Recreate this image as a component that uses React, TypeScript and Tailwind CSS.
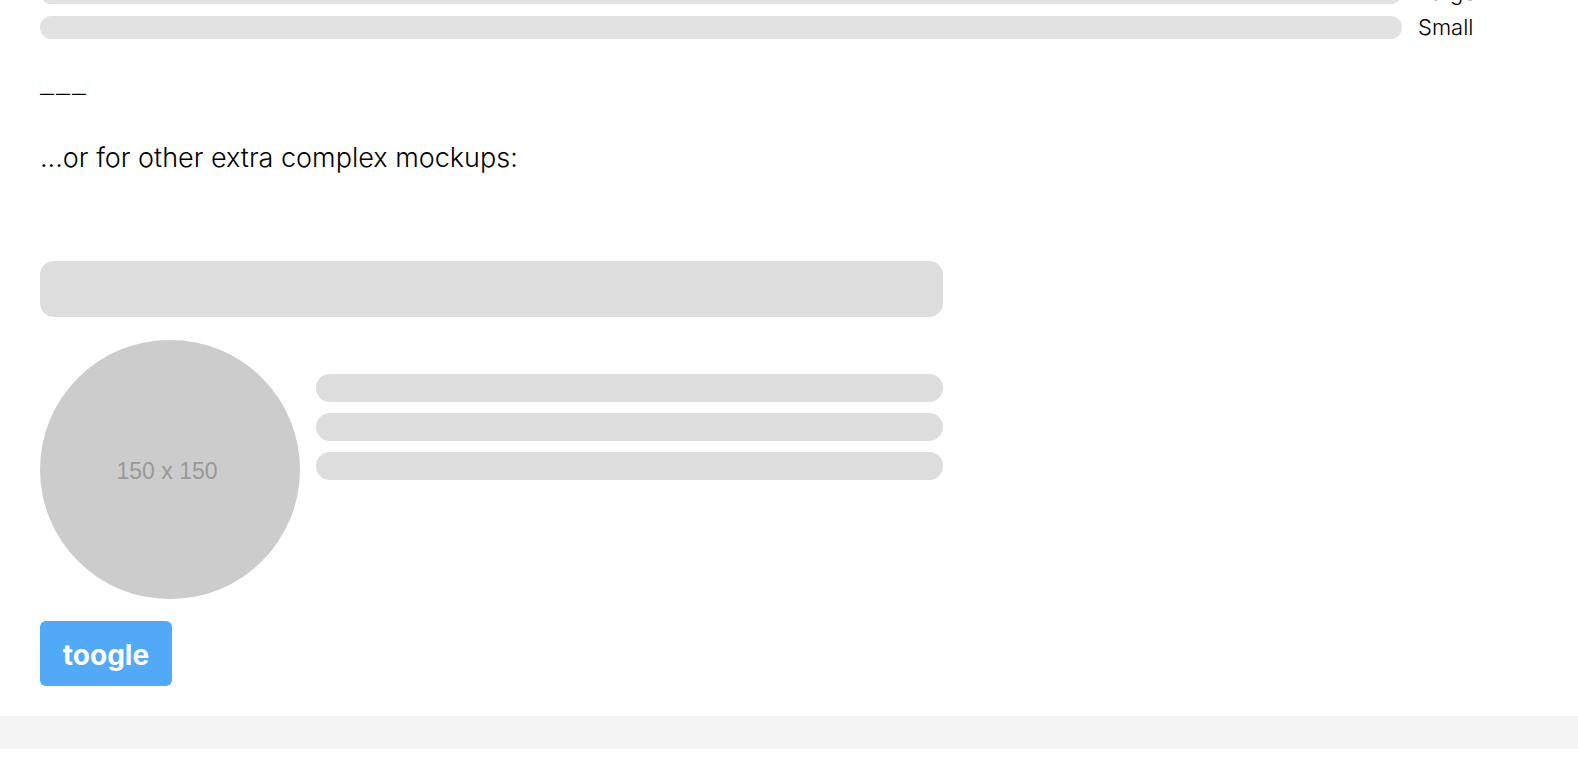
const SizeRow = ({ label }: { label: string }) => (
  <div className="flex items-center gap-4">
    <div className="h-[23px] flex-1 rounded-full bg-[#e2e2e2]" />
    <div className="w-[120px] text-[22px] font-light leading-[23px] text-black">
      {label}
    </div>
  </div>
)

const Line = () => <div className="h-[28px] w-full rounded-full bg-[#dddddd]" />

export default function App() {
  return (
    <div className="h-[784px] overflow-hidden bg-white font-['Inter','Liberation_Sans',sans-serif] text-black">
      <div className="-mt-[19px] flex flex-col gap-[12px] px-10">
        <SizeRow label="Large" />
        <SizeRow label="Small" />
      </div>
      <div className="px-10 pt-[42px] text-[28px] font-extralight leading-[24px] tracking-[2px] text-black">
        –––
      </div>
      <p className="px-10 pt-[38px] text-[27px] font-light leading-[30px]">
        ...or for other extra complex mockups:
      </p>
      <div className="w-[983px] px-10 pt-[88px]">
        <div className="h-[56px] w-full rounded-[14px] bg-[#dddddd]" />
        <div className="mt-[23px] flex gap-4">
          <div className="flex h-[259px] w-[260px] shrink-0 items-center justify-center rounded-full bg-[#cccccc] pr-[6px] pt-[4px] font-['Liberation_Sans',sans-serif] text-[23px] text-[#999999]">
            150 x 150
          </div>
          <div className="flex flex-1 flex-col gap-[11px] pt-[34px]">
            <Line />
            <Line />
            <Line />
          </div>
        </div>
        <button className="mt-[22px] h-[65px] w-[132px] rounded-[6px] bg-[#51a9f8] pt-[2px] text-[28px] font-bold text-white">
          toogle
        </button>
      </div>
      <div className="mt-[30px] h-[33px] w-full bg-[#f4f4f4]" />
    </div>
  )
}
